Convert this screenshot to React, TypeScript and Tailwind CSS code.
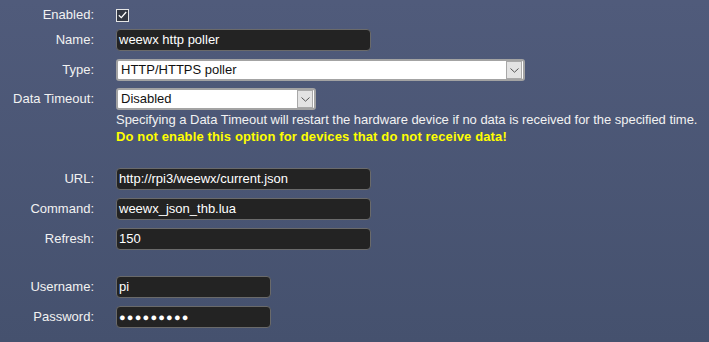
import { ReactNode } from 'react';

const font = { fontFamily: '"Liberation Sans", Arial, sans-serif' };

function Row({ label, children, className = '' }: { label: string; children: ReactNode; className?: string }) {
  return (
    <div className={`flex items-start ${className}`}>
      <div className="w-[94px] shrink-0 text-right leading-[22px] text-[#f2f2f2]">{label}</div>
      <div className="ml-[22px] min-w-0">{children}</div>
    </div>
  );
}

function TextBox({ value, width }: { value: ReactNode; width: string }) {
  return (
    <div
      className={`${width} flex h-[22px] items-center rounded-[4px] border border-[#6a6a6a] bg-[#232323] pl-[2px] text-white`}
    >
      {value}
    </div>
  );
}

function Select({ value, width }: { value: string; width: string }) {
  return (
    <div
      className={`${width} flex h-[22px] items-center justify-between rounded-[3px] border-2 border-[#a3a3a3] bg-white pl-[3px] text-[#111]`}
    >
      <span>{value}</span>
      <span className="mr-[1px] flex h-[18px] w-[16px] items-center justify-center border border-[#a8a8a8] bg-[#e3e3e3]">
        <svg width="9" height="5" viewBox="0 0 9 5" fill="none">
          <path d="M0.5 0.5 L4.5 4.2 L8.5 0.5" stroke="#555" strokeWidth="1" />
        </svg>
      </span>
    </div>
  );
}

export default function App() {
  return (
    <div
      className="h-[342px] w-[709px] overflow-hidden bg-gradient-to-b from-[#505b7b] to-[#45516e] text-[13px]"
      style={font}
    >
      <Row label="Enabled:" className="mt-[4px]">
        <div className="flex h-[22px] items-center">
          <span className="flex h-[13px] w-[13px] items-center justify-center border border-[#e6e6e6] bg-[#333843]">
            <svg width="9" height="8" viewBox="0 0 9 8" fill="none">
              <path d="M0.8 4.2 L3.3 6.6 L8.2 1" stroke="#fff" strokeWidth="1.3" />
            </svg>
          </span>
        </div>
      </Row>

      <Row label="Name:" className="mt-[3px]">
        <TextBox value="weewx http poller" width="w-[255px]" />
      </Row>

      <Row label="Type:" className="mt-[8px]">
        <Select value="HTTP/HTTPS poller" width="w-[409px]" />
      </Row>

      <Row label="Data Timeout:" className="mt-[7px]">
        <Select value="Disabled" width="w-[200px]" />
        <div className="mt-[1px] whitespace-nowrap leading-[17px] tracking-[-0.03px] text-[#f2f2f2]">
          Specifying a Data Timeout will restart the hardware device if no data is received for the specified time.
        </div>
        <div className="whitespace-nowrap font-bold leading-[17px] tracking-[0.14px] text-[#ffff00]">
          Do not enable this option for devices that do not receive data!
        </div>
      </Row>

      <Row label="URL:" className="mt-[23px]">
        <TextBox value="http://rpi3/weewx/current.json" width="w-[255px]" />
      </Row>
      <Row label="Command:" className="mt-[8px]">
        <TextBox value="weewx_json_thb.lua" width="w-[255px]" />
      </Row>
      <Row label="Refresh:" className="mt-[8px]">
        <TextBox value="150" width="w-[255px]" />
      </Row>

      <Row label="Username:" className="mt-[26px]">
        <TextBox value="pi" width="w-[155px]" />
      </Row>
      <Row label="Password:" className="mt-[8px]">
        <TextBox
          value={<span className="tracking-[1.2px] text-[11px]">●●●●●●●●●</span>}
          width="w-[155px]"
        />
      </Row>
    </div>
  );
}
